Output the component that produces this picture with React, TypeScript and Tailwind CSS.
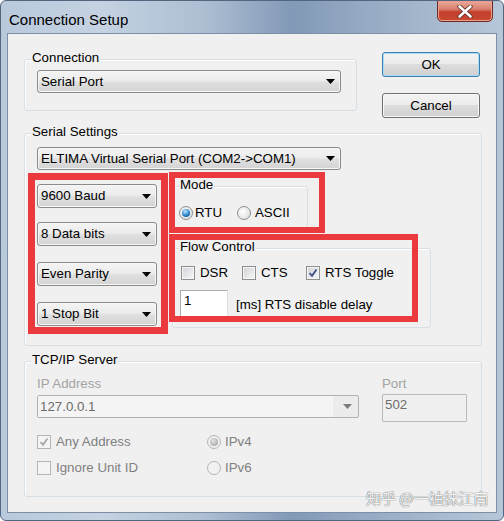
import type { ReactNode } from 'react';

function Arrow({ disabled }: { disabled?: boolean }) {
  return (
    <svg width="9" height="5" viewBox="0 0 9 5" className="shrink-0">
      <path d="M0 0h9L4.5 5z" fill={disabled ? '#7c7c7c' : '#000'} />
    </svg>
  );
}

function Combo({ value, className = '' }: { value: string; className?: string }) {
  return (
    <div
      className={`flex items-center justify-between rounded-[3px] border border-[#8a8a8a] bg-[linear-gradient(#f4f4f4,#ececec_45%,#dfdfdf_55%,#d3d3d3)] pl-[3px] pr-[5px] text-black shadow-[inset_0_0_0_1px_#f7f7f7] ${className}`}
    >
      <span className="leading-[16px] whitespace-nowrap">{value}</span>
      <Arrow />
    </div>
  );
}

function Group({ label, className = '', children }: { label: string; className?: string; children?: ReactNode }) {
  return (
    <div className={`relative rounded-[3px] border border-[#d5dfe5] shadow-[inset_1px_1px_0_#ffffff] ${className}`}>
      <span className="absolute left-[6px] top-[-10px] bg-[#f0f0f0] px-[1px] leading-[16px] whitespace-nowrap">{label}</span>
      {children}
    </div>
  );
}

function CheckBox({ checked, disabled }: { checked?: boolean; disabled?: boolean }) {
  return (
    <span
      className={`flex h-[14px] w-[14px] shrink-0 items-center justify-center border ${
        disabled
          ? 'border-[#b5b5b5] bg-[#f4f4f4]'
          : 'border-[#8e8f8f] bg-[linear-gradient(135deg,#cfd2d7,#f8f8f8)] shadow-[inset_0_0_0_1px_#f6f6f6]'
      }`}
    >
      {checked && (
        <svg width="10" height="10" viewBox="0 0 10 10">
          <path d="M1.5 5 4 7.8 8.5 1.5" fill="none" stroke={disabled ? '#a6a6a6' : '#3c4f8a'} strokeWidth="1.8" />
        </svg>
      )}
    </span>
  );
}

function Radio({ checked, disabled }: { checked?: boolean; disabled?: boolean }) {
  return (
    <span
      className={`flex h-[14px] w-[14px] shrink-0 items-center justify-center rounded-full border ${
        disabled
          ? 'border-[#b5b5b5] bg-[#f1f1f1]'
          : 'border-[#8e8f8f] bg-[radial-gradient(circle_at_40%_40%,#ffffff,#d6d7d9)]'
      }`}
    >
      {checked && (
        <span
          className={`h-[8px] w-[8px] rounded-full ${
            disabled
              ? 'bg-[radial-gradient(circle_at_40%_35%,#e4e4e4,#999999)]'
              : 'bg-[radial-gradient(circle_at_40%_30%,#bfe8ff,#2a86cc_55%,#0b3d75)]'
          }`}
        />
      )}
    </span>
  );
}

function WinButton({ label, primary }: { label: string; primary?: boolean }) {
  return (
    <button
      className={`h-[25px] w-[98px] rounded-[3px] border bg-[linear-gradient(#f3f3f3,#ebebeb_50%,#dddddd_50%,#d0d0d0)] leading-[16px] text-black ${
        primary ? 'border-[#3c7fb1] shadow-[inset_0_0_0_1px_#a6dcf5]' : 'border-[#707070] shadow-[inset_0_0_0_1px_#f8f8f8]'
      }`}
    >
      {label}
    </button>
  );
}

export default function App() {
  return (
    <div className="relative h-[521px] w-[504px] overflow-hidden rounded-[6px] border border-[#52667f] bg-[linear-gradient(90deg,#b9c9dc,#c4d2e2_20%,#aebfd3_40%,#8299b7_58%,#9cb0c7_78%,#b7c7d9)] font-['Liberation_Sans',Arial,sans-serif] text-[13.3px] text-black">
      {/* title bar */}
      <div className="flex h-[32px] items-start justify-between">
        <span className="pl-[8px] pt-[10px] text-[15px] leading-[18px]">Connection Setup</span>
        <div className="mr-[10px] -mt-[1px] flex h-[22px] w-[56px] items-center justify-center rounded-b-[5px] border border-[#6e2b23] bg-[linear-gradient(#e9aa9d,#d9806f_40%,#c3402d_55%,#c9492f)] shadow-[inset_0_0_0_1px_#eb9f8f]">
          <svg width="16" height="13" viewBox="0 0 16 13">
            <path d="M2.5 1.5 13.5 11.5M13.5 1.5 2.5 11.5" stroke="#5a2a26" strokeWidth="4.2" strokeLinecap="round" />
            <path d="M2.5 1.5 13.5 11.5M13.5 1.5 2.5 11.5" stroke="#ffffff" strokeWidth="2.6" strokeLinecap="round" />
          </svg>
        </div>
      </div>

      {/* client area */}
      <div className="mx-[6px] h-[480px] border border-[#7d8fa7] bg-[#f0f0f0] pl-[16px]">
        <div className="flex items-start pt-[18px]">
          <Group label="Connection" className="mt-[7px] h-[52px] w-[333px]">
            <Combo value="Serial Port" className="ml-[12px] mt-[10px] h-[23px] w-[304px]" />
          </Group>
          <div className="ml-[25px] flex flex-col gap-[16px]">
            <WinButton label="OK" primary />
            <WinButton label="Cancel" />
          </div>
        </div>

        <Group label="Serial Settings" className="mt-[15px] h-[213px] w-[458px]">
          <Combo value="ELTIMA Virtual Serial Port (COM2->COM1)" className="ml-[12px] mt-[13px] h-[23px] w-[304px]" />
          <div className="ml-[12px] mt-[14px] flex items-start">
            <div className="flex w-[120px] flex-col">
              <Combo value="9600 Baud" className="h-[24px]" />
              <Combo value="8 Data bits" className="mt-[14px] h-[24px]" />
              <Combo value="Even Parity" className="mt-[16px] h-[24px]" />
              <Combo value="1 Stop Bit" className="mt-[16px] h-[24px]" />
            </div>
            <div className="ml-[15px] flex flex-col">
              <Group label="Mode" className="mt-[2px] h-[43px] w-[136px]">
                <div className="mt-[18px] flex h-[15px] items-center pl-[6px]">
                  <label className="flex w-[58px] items-center gap-[2px]">
                    <Radio checked />
                    RTU
                  </label>
                  <label className="flex items-center gap-[4px]">
                    <Radio />
                    ASCII
                  </label>
                </div>
              </Group>
              <Group label="Flow Control" className="mt-[19px] h-[80px] w-[259px]">
                <div className="mt-[16px] flex h-[15px] items-center pl-[8px]">
                  <label className="flex w-[61px] items-center gap-[5px]">
                    <CheckBox />
                    DSR
                  </label>
                  <label className="flex w-[64px] items-center gap-[5px]">
                    <CheckBox />
                    CTS
                  </label>
                  <label className="flex items-center gap-[5px]">
                    <CheckBox checked />
                    RTS Toggle
                  </label>
                </div>
                <div className="ml-[7px] mt-[10px] flex items-start">
                  <div className="h-[27px] w-[48px] border border-[#abadb3] border-b-[#e3e9ef] border-r-[#dbdfe6] bg-white pl-[3px] pt-[2px] leading-[16px]">
                    1
                  </div>
                  <span className="ml-[8px] mt-[7px] leading-[16px]">[ms] RTS disable delay</span>
                </div>
              </Group>
            </div>
          </div>

          {/* annotation outlines */}
          <div className="absolute left-[3px] top-[39px] h-[161px] w-[140px] border-[7px] border-[#ea3a3e]" />
          <div className="absolute left-[144px] top-[38px] h-[61px] w-[156px] border-[6px] border-[#ea3a3e]" />
          <div className="absolute left-[144px] top-[100px] h-[88px] w-[249px] border-[6px] border-[#ea3a3e]" />
        </Group>

        <Group label="TCP/IP Server" className="mt-[15px] h-[136px] w-[458px]">
          <div className="flex items-start pl-[12px]">
            <div className="w-[322px]">
              <div className="mt-[14px] leading-[16px] text-[#a3a3a3]">IP Address</div>
              <div className="mt-[3px] flex h-[23px] items-center justify-between rounded-[2px] border border-[#adb2b5] bg-[#ececec] pr-[6px] text-[#6d6d6d]">
                <span className="flex h-full w-[295px] items-center bg-[#f4f4f4] pl-[2px] leading-[16px]">127.0.0.1</span>
                <Arrow disabled />
              </div>
            </div>
            <div className="ml-[23px] w-[85px]">
              <div className="mt-[14px] leading-[16px] text-[#a3a3a3]">Port</div>
              <div className="mt-[2px] h-[28px] rounded-[1px] border border-[#b9b9b9] pl-[2px] pt-[2px] leading-[16px] text-[#6d6d6d]">
                502
              </div>
            </div>
          </div>
          <div className="mt-[12px] flex h-[15px] items-center pl-[12px] text-[#808080]">
            <label className="flex w-[170px] items-center gap-[5px]">
              <CheckBox checked disabled />
              Any Address
            </label>
            <label className="flex items-center gap-[4px]">
              <Radio checked disabled />
              IPv4
            </label>
          </div>
          <div className="mt-[11px] flex h-[15px] items-center pl-[12px] text-[#808080]">
            <label className="flex w-[170px] items-center gap-[5px]">
              <CheckBox disabled />
              Ignore Unit ID
            </label>
            <label className="flex items-center gap-[4px]">
              <Radio disabled />
              IPv6
            </label>
          </div>
        </Group>
      </div>

      {/* watermark */}
      <span className="absolute left-[365px] top-[488px] font-['Noto_Sans_CJK_SC',sans-serif] text-[15px] leading-[18px] text-[#f4f4f4] [text-shadow:0_0_1px_#6f6f6f,0_0_1px_#6f6f6f]">
        知乎 @一袖抹江南
      </span>
    </div>
  );
}
